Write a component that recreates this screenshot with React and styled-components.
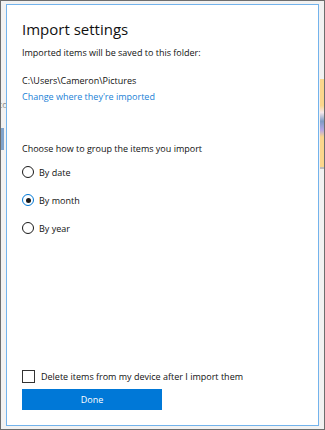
import styled, { createGlobalStyle } from "styled-components";

const GlobalStyle = createGlobalStyle`
    html, body {
        margin: 0;
        padding: 0;
        background: #f2f2f2;
    }
    body {
        font-family: 'Open Sans', 'Noto Sans', Arial, sans-serif;
    }
`;

const Frame = styled.div`
    position: relative;
    box-sizing: border-box;
    width: 325px;
    height: 430px;
    padding: 3px 0 0 5px;
    border: 1px solid #6d6d6d;
    background: #f2f2f2;
    overflow: hidden;
`;

// bits of the window behind the dialog
const BehindText = styled.span`
    position: absolute;
    left: -2px;
    top: 97px;
    font-size: 9px;
    color: #8a8a8a;
`;

const BehindBar = styled.div`
    position: absolute;
    left: 0;
    top: 127px;
    width: 3px;
    height: 22px;
    background: #7fa3cc;
`;

const BehindImage = styled.div`
    position: absolute;
    right: 0;
    top: 78px;
    width: 4px;
    height: 88px;
    background: linear-gradient(180deg, #fbd68c 0%, #fbd68c 30%, #f6e8ec 38%, #7e9bc4 48%, #b7a7e6 58%, #fbd68c 66%, #fbd68c 100%);
    border-bottom: 2px solid #bdbdbd;
`;

const Dialog = styled.div`
    position: relative;
    box-sizing: border-box;
    display: flex;
    flex-flow: column;
    width: 313px;
    height: 422px;
    padding: 14px 15px 15px 15px;
    border: 1px solid #73b3ec;
    background: #ffffff;
    color: #111;
    font-size: 9px;
`;

const Title = styled.h1`
    margin: 0;
    font-size: 15px;
    line-height: 20px;
    font-weight: 400;
    color: #111;
`;

const Text = styled.p`
    margin: ${props => props.$top || 0}px 0 0 0;
    font-size: 9px;
    line-height: 14px;
`;

const Link = styled.a`
    display: block;
    margin-top: 2px;
    font-size: 9px;
    line-height: 14px;
    color: #1a7fd6;
    text-decoration: none;
`;

const RadioGroup = styled.div`
    display: flex;
    flex-flow: column;
    margin-top: 2px;
`;

const RadioRow = styled.label`
    display: flex;
    align-items: center;
    gap: 5px;
    height: 28px;
    font-size: 9px;
`;

const RadioCircle = styled.span`
    box-sizing: border-box;
    display: flex;
    align-items: center;
    justify-content: center;
    width: 12px;
    height: 12px;
    border-radius: 50%;
    border: 1.5px solid ${props => props.$checked ? "#0078d7" : "#1a1a1a"};

    &::after {
        content: "";
        display: ${props => props.$checked ? "block" : "none"};
        width: 5px;
        height: 5px;
        border-radius: 50%;
        background: #1a1a1a;
    }
`;

const Bottom = styled.div`
    display: flex;
    flex-flow: column;
    gap: 6px;
    margin-top: auto;
`;

const CheckRow = styled.label`
    display: flex;
    align-items: center;
    gap: 6px;
    height: 14px;
    font-size: 9px;
`;

const CheckBox = styled.span`
    box-sizing: border-box;
    width: 13px;
    height: 13px;
    border: 1.5px solid #333;
`;

const DoneButton = styled.button`
    width: 140px;
    height: 21px;
    padding: 0;
    border: none;
    background: #0078d7;
    color: #ffffff;
    font-family: inherit;
    font-size: 9px;
`;

const options = [
    { label: "By date", checked: false },
    { label: "By month", checked: true },
    { label: "By year", checked: false },
];

export default function App() {
    return (
        <Frame>
            <GlobalStyle />
            <BehindText>to</BehindText>
            <BehindBar />
            <BehindImage />
            <Dialog>
                <Title>Import settings</Title>
                <Text $top={7}>Imported items will be saved to this folder:</Text>
                <Text $top={14}>C:\Users\Cameron\Pictures</Text>
                <Link href="#">Change where they're imported</Link>
                <Text $top={38}>Choose how to group the items you import</Text>
                <RadioGroup>
                    {options.map(o => (
                        <RadioRow key={o.label}>
                            <RadioCircle $checked={o.checked} />
                            {o.label}
                        </RadioRow>
                    ))}
                </RadioGroup>
                <Bottom>
                    <CheckRow>
                        <CheckBox />
                        Delete items from my device after I import them
                    </CheckRow>
                    <DoneButton>Done</DoneButton>
                </Bottom>
            </Dialog>
        </Frame>
    );
}
